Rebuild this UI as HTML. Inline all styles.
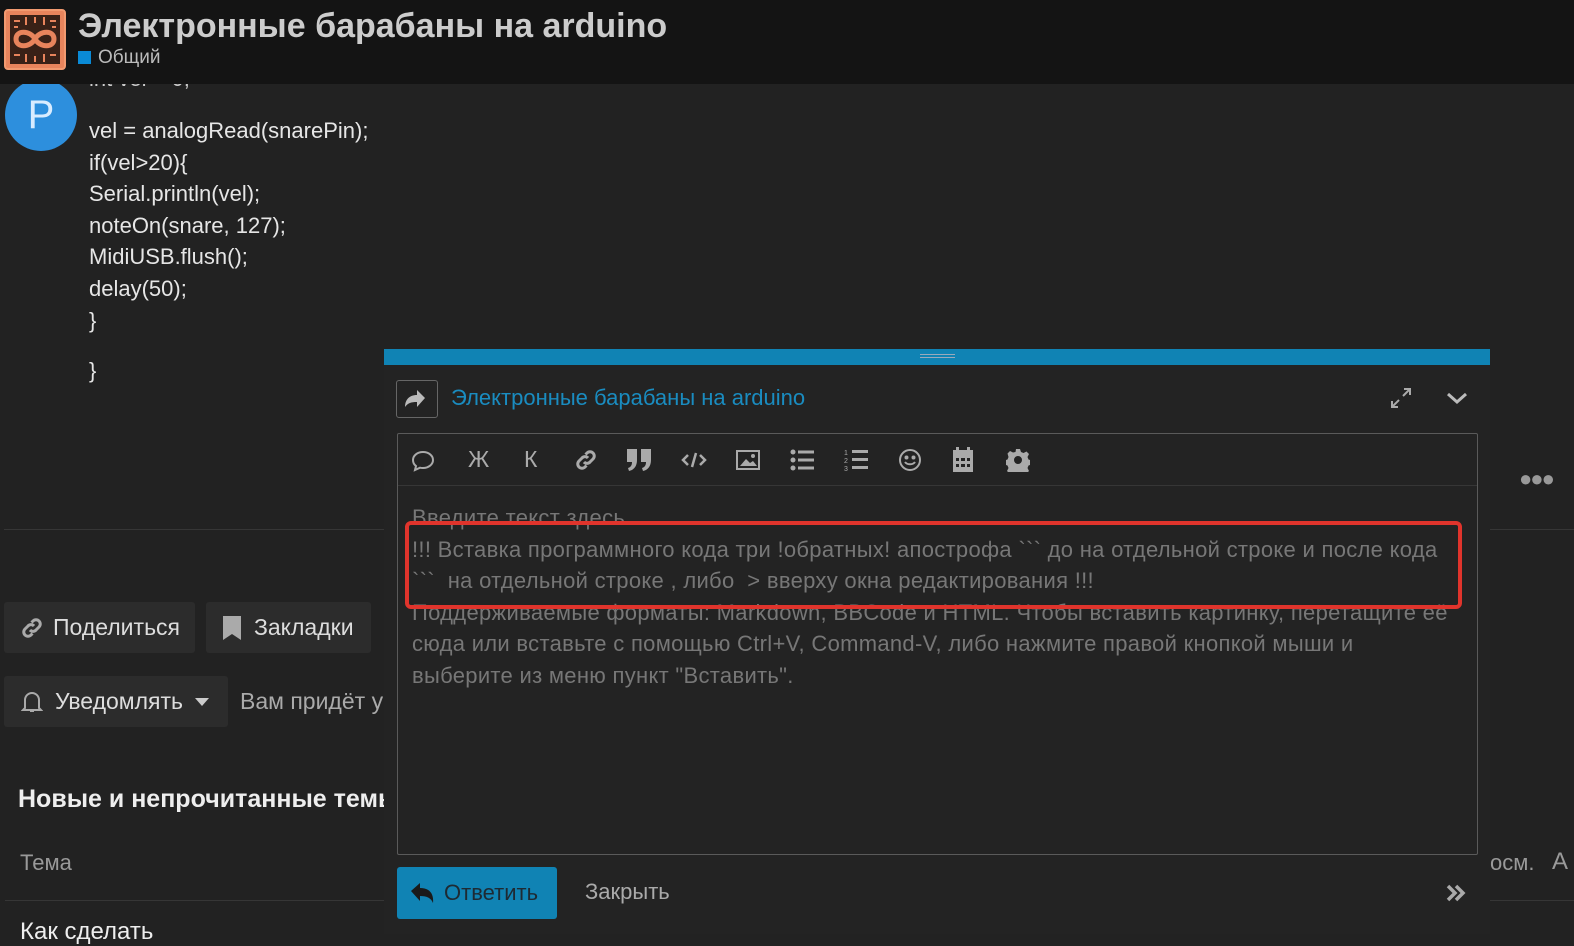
<!DOCTYPE html>
<html><head><meta charset="utf-8">
<style>
*{box-sizing:border-box;margin:0;padding:0}
body{width:1574px;height:934px;overflow:hidden;background:#222;font-family:"Liberation Sans","DejaVu Sans",sans-serif;color:#ddd;position:relative}
.abs{position:absolute}
.hdr{left:0;top:0;width:1574px;height:84px;background:#141414}
.code{left:89px;font-size:22px;color:#e6e6e6;letter-spacing:0}
.btn{background:#2c2c2c;border-radius:3px;color:#ddd;font-size:23px;display:flex;align-items:center}
.tb svg{position:absolute}
</style></head><body>
<div class="abs code" style="top:66px;color:#ccc">int vel = 0;</div>
<div class="abs" style="left:5px;top:79px;width:72px;height:72px;border-radius:50%;background:#2d8fdd;color:#d8ecff;font-size:40px;text-align:center;line-height:72px">P</div>
<div class="abs code" style="top:115px;line-height:31.6px">vel = analogRead(snarePin);<br>if(vel&gt;20){<br>Serial.println(vel);<br>noteOn(snare, 127);<br>MidiUSB.flush();<br>delay(50);<br>}</div>
<div class="abs code" style="top:358px">}</div>
<div class="abs" style="left:1519px;top:466px;font-size:22px;color:#999;letter-spacing:-2px">●●●</div>
<div class="abs" style="left:4px;top:529px;width:1570px;height:1px;background:#363636"></div>

<div class="abs btn" style="left:4px;top:602px;width:191px;height:51px;padding-left:16px">
<svg width="24" height="24" viewBox="0 0 24 24" fill="none" stroke="#aaa" stroke-width="3"><path d="M10 14a4 4 0 0 0 6 0l3-3a4 4 0 0 0-6-6l-1.5 1.5M14 10a4 4 0 0 0-6 0l-3 3a4 4 0 0 0 6 6l1.5-1.5"/></svg>
<span style="margin-left:9px">Поделиться</span></div>
<div class="abs btn" style="left:206px;top:602px;width:165px;height:51px;padding-left:17px">
<svg width="18" height="24" viewBox="0 0 18 24"><path d="M0 0h18v24l-9-6-9 6z" fill="#aaa"/></svg>
<span style="margin-left:13px">Закладки</span></div>
<div class="abs" style="left:384px;top:602px;width:3px;height:51px;background:#2c2c2c"></div>
<div class="abs btn" style="left:4px;top:676px;width:224px;height:51px;padding-left:17px">
<svg width="22" height="24" viewBox="0 0 22 24" fill="none" stroke="#aaa" stroke-width="2"><path d="M4 18V10a7 7 0 0 1 14 0v8l2 2H2zM9 21h4"/></svg>
<span style="margin-left:12px">Уведомлять</span>
<svg width="14" height="8" style="margin-left:12px"><path d="M0 0h14L7 8z" fill="#ccc"/></svg></div>
<div class="abs" style="left:240px;top:688px;font-size:23px;color:#aaa">Вам придёт уведомление</div>
<div class="abs" style="left:18px;top:785px;font-size:25px;font-weight:bold;color:#eee">Новые и непрочитанные темы</div>
<div class="abs" style="left:20px;top:850px;font-size:22px;color:#999">Тема</div>
<div class="abs" style="left:5px;top:900px;width:1569px;height:1px;background:#363636"></div>
<div class="abs" style="left:20px;top:918px;font-size:24px;color:#eee">Как сделать</div>
<div class="abs" style="left:1490px;top:850px;font-size:22px;color:#999">осм.</div>
<div class="abs" style="left:1552px;top:848px;font-size:24px;color:#999">А</div>

<div class="abs hdr"></div>
<div class="abs" style="left:4px;top:9px;width:62px;height:61px;background:#e8845c;border-radius:4px;border:2px solid #f29a70">
<svg width="58" height="57" viewBox="0 0 58 57"><rect x="4" y="4" width="50" height="49" fill="#1a0f0a" opacity=".85"/><path d="M10 28c0-9 14-9 19 0s19 9 19 0-14-9-19 0-19 9-19 0z" fill="none" stroke="#e8845c" stroke-width="5"/><path d="M8 10h6M8 16h4M44 10h6M46 16h4M8 44h6M44 44h6M20 6v8M38 6v8M20 43v8M38 43v8M29 6v6M29 45v6" stroke="#e8845c" stroke-width="2"/></svg></div>
<div class="abs" style="left:78px;top:7px;font-size:34px;font-weight:bold;color:#ccc">Электронные барабаны на arduino</div>
<div class="abs" style="left:78px;top:51px;width:13px;height:13px;background:#0a8ad6"></div>
<div class="abs" style="left:98px;top:47px;font-size:19px;color:#bbb">Общий</div>

<div class="abs" style="left:384px;top:349px;width:1106px;height:585px;background:#232323"></div>
<div class="abs" style="left:384px;top:349px;width:1106px;height:16px;background:#1083b4"></div>
<div class="abs" style="left:920px;top:354px;width:35px;height:1px;background:#9ab"></div>
<div class="abs" style="left:920px;top:357px;width:35px;height:1px;background:#9ab"></div>
<div class="abs" style="left:396px;top:380px;width:42px;height:38px;border:1px solid #666;border-radius:3px">
<svg width="40" height="36" viewBox="0 0 40 36"><path d="M28 17l-8-8v5c-8 0-12 5-12 12 3-4 6-5 12-5v5z" fill="#bbb"/></svg></div>
<div class="abs" style="left:451px;top:385px;font-size:22px;color:#1a8cc0">Электронные барабаны на arduino</div>
<svg class="abs" style="left:1390px;top:387px" width="22" height="22" viewBox="0 0 22 22" fill="#aaa" stroke="#aaa" stroke-width="2"><path d="M14 2h6v6M20 2l-7 7M8 20H2v-6M2 20l7-7" fill="none"/></svg>
<svg class="abs" style="left:1446px;top:390px" width="22" height="16" viewBox="0 0 22 16"><path d="M2 4l9 8 9-8" fill="none" stroke="#bbb" stroke-width="3"/></svg>

<div class="abs" style="left:397px;top:433px;width:1081px;height:422px;border:1px solid #5a5a5a;border-radius:2px"></div>
<div class="abs" style="left:398px;top:485px;width:1079px;height:1px;background:#363636"></div>
<div class="abs tb" style="left:398px;top:440px;width:700px;height:40px">
<svg style="left:13px;top:9px" width="24" height="24" viewBox="0 0 24 24" fill="none" stroke="#aaa" stroke-width="2"><path d="M12 3c5.5 0 10 3.5 10 8s-4.5 8-10 8c-1 0-2 0-3-.3L4 21l1-4c-2-1.5-3-3.5-3-6 0-4.5 4.5-8 10-8z"/></svg>
<div class="abs" style="left:70px;top:6px;font-size:23px;color:#aaa">Ж</div>
<div class="abs" style="left:126px;top:6px;font-size:23px;color:#aaa">К</div>
<svg style="left:176px;top:8px" width="24" height="24" viewBox="0 0 24 24" fill="none" stroke="#aaa" stroke-width="3"><path d="M10 14a4 4 0 0 0 6 0l3-3a4 4 0 0 0-6-6l-1.5 1.5M14 10a4 4 0 0 0-6 0l-3 3a4 4 0 0 0 6 6l1.5-1.5"/></svg>
<svg style="left:229px;top:9px" width="26" height="22" viewBox="0 0 26 22" fill="#aaa"><path d="M0 0h10v11c0 6-3 10-8 11l-1-3c3-1 4-3 4-6H0zM14 0h10v11c0 6-3 10-8 11l-1-3c3-1 4-3 4-6h-5z"/></svg>
<svg style="left:283px;top:10px" width="26" height="20" viewBox="0 0 26 20" fill="none" stroke="#aaa" stroke-width="2.5"><path d="M7 5L2 10l5 5M19 5l5 5-5 5M15 3l-4 14"/></svg>
<svg style="left:338px;top:10px" width="24" height="20" viewBox="0 0 24 20"><rect x="1" y="1" width="22" height="18" fill="none" stroke="#aaa" stroke-width="2"/><path d="M4 16l6-7 4 4 3-2 4 5z" fill="#aaa"/><circle cx="17" cy="6" r="2" fill="#aaa"/></svg>
<svg style="left:392px;top:9px" width="24" height="22" viewBox="0 0 24 22" fill="#aaa"><circle cx="3" cy="3" r="2.5"/><circle cx="3" cy="11" r="2.5"/><circle cx="3" cy="19" r="2.5"/><rect x="8" y="1.5" width="16" height="3"/><rect x="8" y="9.5" width="16" height="3"/><rect x="8" y="17.5" width="16" height="3"/></svg>
<svg style="left:446px;top:8px" width="24" height="24" viewBox="0 0 24 24" fill="#aaa"><text x="0" y="7" font-size="7" font-family="Liberation Sans">1</text><text x="0" y="15" font-size="7" font-family="Liberation Sans">2</text><text x="0" y="23" font-size="7" font-family="Liberation Sans">3</text><rect x="8" y="2" width="16" height="3"/><rect x="8" y="10" width="16" height="3"/><rect x="8" y="18" width="16" height="3"/></svg>
<svg style="left:500px;top:8px" width="24" height="24" viewBox="0 0 24 24" fill="none" stroke="#aaa" stroke-width="2"><circle cx="12" cy="12" r="10"/><circle cx="8.5" cy="9.5" r="1" fill="#aaa"/><circle cx="15.5" cy="9.5" r="1" fill="#aaa"/><path d="M7 14c2 3 8 3 10 0"/></svg>
<svg style="left:554px;top:7px" width="22" height="26" viewBox="0 0 22 26" fill="#aaa"><rect x="4" y="0" width="3" height="5"/><rect x="15" y="0" width="3" height="5"/><path d="M1 3h20v22H1zM4 11v3h3v-3zm5 0v3h4v-3zm6 0v3h3v-3zM4 17v3h3v-3zm5 0v3h4v-3zm6 0v3h3v-3z" fill-rule="evenodd"/></svg>
<svg style="left:608px;top:8px" width="24" height="24" viewBox="0 0 24 24" fill="#aaa"><path d="M10 1h4l1 3 2.5 1 3-1.5 2.5 2.5-1.5 3 1 2.5 3 1v4l-3 1-1 2.5 1.5 3-2.5 2.5-3-1.5-2.5 1-1 3h-4l-1-3-2.5-1-3 1.5-2.5-2.5 1.5-3-1-2.5-3-1v-4l3-1 1-2.5L1.5 5.5 4 3l3 1.5L9.5 4zM12 8a4 4 0 1 0 0 8 4 4 0 0 0 0-8z" fill-rule="evenodd"/></svg>
</div>

<div class="abs" style="left:412px;top:502px;font-size:22px;color:#777;line-height:31.6px;width:1060px;white-space:nowrap;letter-spacing:0.3px">Введите текст здесь<br>!!! Вставка программного кода три !обратных! апострофа &#96;&#96;&#96; до на отдельной строке и после кода<br>&#96;&#96;&#96;&nbsp; на отдельной строке , либо&nbsp; &gt; вверху окна редактирования !!!<br>Поддерживаемые форматы: Markdown, BBCode и HTML. Чтобы вставить картинку, перетащите её<br>сюда или вставьте с помощью Ctrl+V, Command-V, либо нажмите правой кнопкой мыши и<br>выберите из меню пункт "Вставить".</div>
<div class="abs" style="left:405px;top:521px;width:1057px;height:88px;border:4px solid #e0342c;border-radius:6px"></div>

<div class="abs" style="left:397px;top:867px;width:160px;height:52px;background:#1083b4;border-radius:3px;display:flex;align-items:center;padding-left:14px">
<svg width="24" height="22" viewBox="0 0 24 22"><path d="M0 9l9-8v5c9 0 14 5 13 15-2-5-6-7-13-7v5z" fill="#1a1a1a"/></svg>
<span style="margin-left:9px;font-size:22px;color:#1e2a33">Ответить</span></div>
<div class="abs" style="left:585px;top:879px;font-size:22px;color:#aaa">Закрыть</div>
<svg class="abs" style="left:1446px;top:884px" width="20" height="18" viewBox="0 0 20 18" fill="none" stroke="#aaa" stroke-width="3.5"><path d="M2 2l7 7-7 7M10 2l7 7-7 7"/></svg>
</body></html>
